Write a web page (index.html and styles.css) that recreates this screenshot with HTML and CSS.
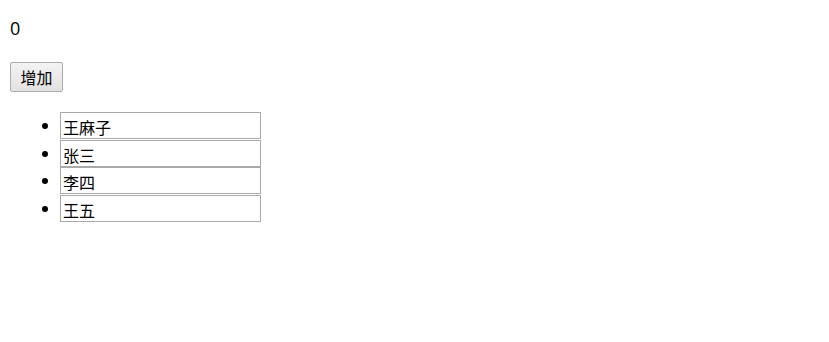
FILE: index.html
```html
<!DOCTYPE html>
<html lang="zh">
<head>
<meta charset="utf-8">
<link rel="stylesheet" href="styles.css">
</head>
<body>
<div class="app">
  <p class="count">0</p>
  <button class="add">增加</button>
  <ul class="list">
    <li><input class="name" value="王麻子"></li>
    <li><input class="name" value="张三"></li>
    <li><input class="name" value="李四"></li>
    <li><input class="name" value="王五"></li>
  </ul>
</div>
</body>
</html>
```
FILE: styles.css
```css
html, body {
  margin: 0;
  padding: 0;
}
body {
  font-family: "Open Sans", "Noto Sans CJK SC", sans-serif;
  font-size: 16px;
  color: #000;
  background: #fff;
}
.app {
  padding: 16px 8px 8px;
}
.count {
  margin: 0 0 0 2px;
  font-size: 18px;
  line-height: 24px;
  height: 24px;
}
.add {
  display: block;
  margin: 22px 0 0 2px;
  font-family: "Noto Sans CJK SC", sans-serif;
  font-size: 16px;
  line-height: 20px;
  height: 30px;
  width: 53px;
  padding: 0;
  border: 1px solid #acacac;
  border-radius: 2px;
  background: linear-gradient(#f3f3f3, #e2e2e2);
  color: #000;
}
.list {
  margin: 20px 0 0 0;
  padding-left: 52px;
}
.list li {
  height: 27.5px;
  line-height: 27px;
}
.name {
  box-sizing: border-box;
  width: 201px;
  height: 27px;
  margin: 0;
  padding: 3px 2px 0;
  border: 1px solid #a9a9a9;
  font-family: "Noto Sans CJK SC", sans-serif;
  font-size: 16px;
  vertical-align: top;
  color: #000;
  background: #fff;
}
```
